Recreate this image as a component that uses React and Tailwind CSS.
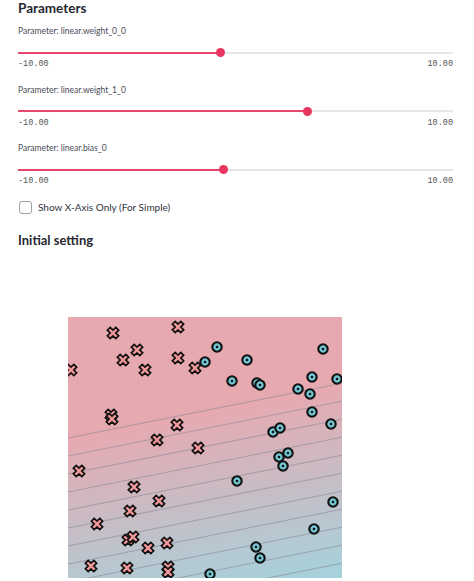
import React from "react";

const XS = [
  [113, 333], [178, 327], [137, 350], [123, 360], [178, 358], [145, 370], [195, 368], [71, 370],
  [111, 415], [112, 419], [177, 425], [157, 440], [198, 448], [79, 471], [134, 487], [159, 501],
  [130, 511], [97, 524], [128, 540], [133, 537], [148, 548], [167, 543], [91, 566], [127, 568],
  [168, 567], [168, 572],
];

const OS = [
  [205, 362], [217, 347], [247, 360], [323, 349], [232, 381], [257, 383], [260, 385], [312, 377],
  [337, 379], [298, 389], [310, 394], [312, 412], [331, 424], [273, 432], [280, 428], [279, 457],
  [288, 453], [283, 466], [237, 481], [333, 502], [314, 529], [256, 547], [260, 558], [210, 574],
];

const SLIDERS = [
  { label: "Parameter: linear.weight_0_0", value: -0.71 },
  { label: "Parameter: linear.weight_1_0", value: 3.33 },
  { label: "Parameter: linear.bias_0", value: -0.57 },
];

const OX = 68;
const OY = 317;
const W = 274;
const H = 261;

function XMarker({ x, y }) {
  const pts = [
    [-2, -6], [2, -6], [2, -2], [6, -2], [6, 2], [2, 2], [2, 6], [-2, 6], [-2, 2], [-6, 2], [-6, -2], [-2, -2],
  ]
    .map(([a, b]) => `${a},${b}`)
    .join(" ");
  return (
    <polygon
      points={pts}
      transform={`translate(${x - OX} ${y - OY}) rotate(45)`}
      fill="#f2979a"
      stroke="#111"
      strokeWidth="1.7"
      strokeLinejoin="miter"
    />
  );
}

function OMarker({ x, y }) {
  return (
    <g transform={`translate(${x - OX} ${y - OY})`}>
      <circle r="4.7" fill="#72c6d3" stroke="#111" strokeWidth="2.1" />
      <circle r="1.3" fill="#111" />
    </g>
  );
}

function Plot() {
  const lines = [];
  for (let k = 0; k < 12; k++) {
    const c = 121 + 18 * k;
    lines.push(<line key={k} x1={0} y1={c} x2={W} y2={c - 0.2 * W} stroke="#8a8a98" strokeOpacity="0.8" strokeWidth="0.8" />);
  }
  return (
    <svg width={W} height={H} viewBox={`0 0 ${W} ${H}`} className="block">
      <defs>
        <linearGradient id="bg" gradientUnits="userSpaceOnUse" x1="23.3" y1="116.3" x2="60.7" y2="303.7">
          <stop offset="0" stopColor="#e7a9b0" />
          <stop offset="1" stopColor="#a4d3dd" />
        </linearGradient>
      </defs>
      <rect width={W} height={H} fill="url(#bg)" />
      {lines}
      {XS.map(([x, y], i) => (
        <XMarker key={i} x={x} y={y} />
      ))}
      {OS.map(([x, y], i) => (
        <OMarker key={i} x={x} y={y} />
      ))}
    </svg>
  );
}

function Slider({ label, value }) {
  const frac = (value + 10) / 20;
  return (
    <div className="flex flex-col mb-[14.5px]">
      <div className="h-[13px] leading-[13px] text-[8.5px] text-[#4a4c57]">{label}</div>
      <div className="relative h-[15px] mt-[7px] flex items-center">
        <div className="w-full h-[2px] bg-[#e6e6ea] flex">
          <div className="h-full bg-[#e8476d]" style={{ width: `${frac * 100}%` }} />
        </div>
        <div
          className="absolute top-1/2 w-[9px] h-[9px] -mt-[4.5px] -ml-[4.5px] rounded-full bg-[#e8365f]"
          style={{ left: `${frac * 100}%` }}
        />
      </div>
      <div className="h-[9px] leading-[9px] flex justify-between text-[8.5px] text-[#555] font-['Liberation_Mono','DejaVu_Sans_Mono',monospace]">
        <span>-10.00</span>
        <span>10.00</span>
      </div>
    </div>
  );
}

export default function App() {
  return (
    <div className="w-[474px] h-[581px] overflow-hidden bg-white font-['Lato','Noto_Sans',sans-serif] text-[#262730]">
      <div className="pl-[18px] pr-[21px]">
        <div className="h-[25px] pt-[1px] text-[13.5px] leading-[15px] font-bold">Parameters</div>
        {SLIDERS.map((s) => (
          <Slider key={s.label} {...s} />
        ))}
        <div className="flex items-center h-[13px] gap-[6px]">
          <div className="w-[13px] h-[13px] rounded-[3px] border border-[#a0a0a8] bg-white ml-[1px]" />
          <span className="text-[10px] leading-[13px] text-[#31333f]">Show X-Axis Only (For Simple)</span>
        </div>
        <div className="mt-[18px] h-[16px] text-[13px] leading-[16px] font-bold">Initial setting</div>
      </div>
      <div className="pl-[68px] mt-[69px]">
        <Plot />
      </div>
    </div>
  );
}
